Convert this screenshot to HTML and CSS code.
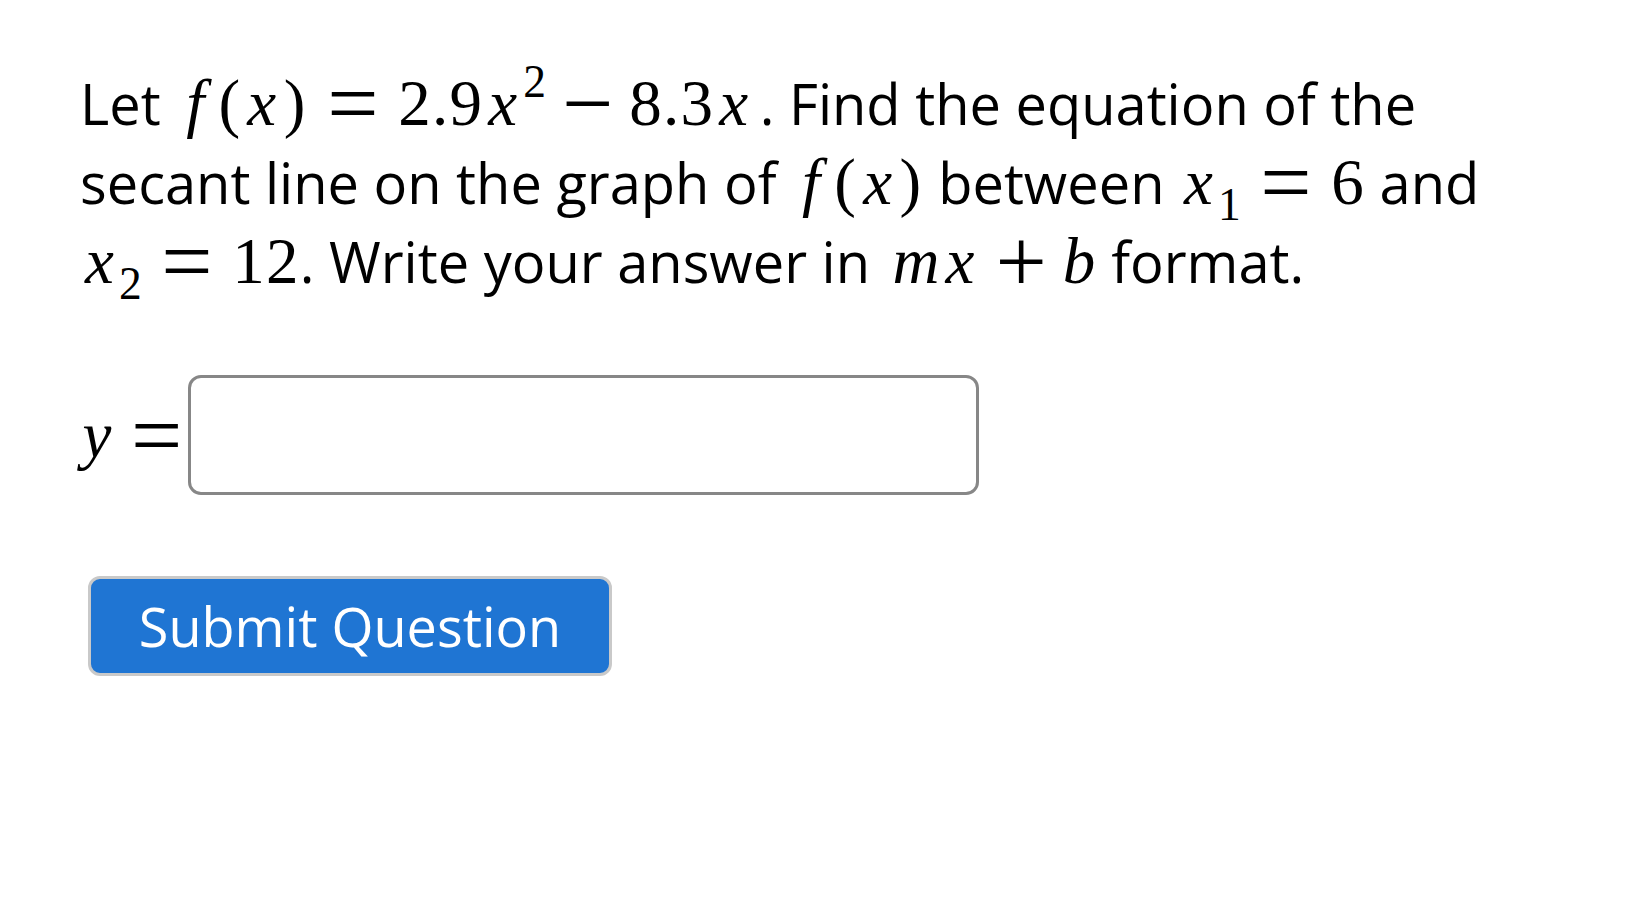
FILE: index.html
```html
<!DOCTYPE html>
<html lang="en">
<head>
<meta charset="utf-8">
<title>Question</title>
<link rel="stylesheet" href="styles.css">
</head>
<body>
<main class="question">
  <p class="prompt">Let <span class="math"><span class="mi f">f</span><span class="mp">(</span><span class="mi x">x</span><span class="mp">)</span><span class="rel">=</span><span class="mn">2.9</span><span class="mi x">x</span><sup class="sup">2</sup><span class="bin">−</span><span class="mn">8.3</span><span class="mi x x-end">x</span></span>. Find the equation of the secant line on the graph of <span class="math"><span class="mi f">f</span><span class="mp">(</span><span class="mi x">x</span><span class="mp">)</span></span> between <span class="math"><span class="mi x">x</span><sub class="sub">1</sub><span class="rel">=</span><span class="mn">6</span></span> and <span class="math"><span class="mi x">x</span><sub class="sub">2</sub><span class="rel">=</span><span class="mn">12</span></span>. Write your answer in <span class="math"><span class="mi m">m</span><span class="mi x">x</span><span class="bin">+</span><span class="mi b">b</span></span> format.</p>
  <div class="answer">
    <span class="math answer-label"><span class="mi y">y</span><span class="rel rel-end">=</span></span>
    <input class="answer-box" type="text" aria-label="y">
  </div>
  <button class="submit" type="button">Submit Question</button>
</main>
</body>
</html>
```

FILE: styles.css
```css
html, body {
  margin: 0;
  padding: 0;
  background: #ffffff;
}

body {
  color: #000000;
  font-family: "Open Sans", "Noto Sans", sans-serif;
}

.question {
  width: 1440px;
  padding: 64px 0 0 80px;
}

.prompt {
  margin: 0;
  font-size: 56px;
  font-weight: 500;
  line-height: 79px;
}

.math {
  font-family: "Liberation Serif", "DejaVu Serif", serif;
  font-size: 65px;
  font-weight: 400;
  white-space: nowrap;
}

.mi {
  font-style: italic;
}

.mi.x {
  margin: 0 0.08em 0 0.075em;
}

.mi.x-end {
  margin-right: 0.18em;
}

.mi.f {
  margin: 0 0.18em 0 0.17em;
}

.mi.m {
  margin: 0 0.02em 0 0.12em;
}

.mi.b {
  margin: 0 0.02em 0 0;
}

.mi.y {
  margin: 0 0 0 0.04em;
}

.mp {
  margin: 0 0.037em;
}

.mn {
  letter-spacing: 0.02em;
}

.rel {
  font-size: 1.4em;
  line-height: 0;
  margin: 0 0.215em;
  vertical-align: -0.1em;
}

.bin {
  font-size: 1.4em;
  line-height: 0;
  margin: 0 0.175em;
  vertical-align: -0.1em;
}

.sup {
  font-size: 0.7em;
  line-height: 0;
  vertical-align: 0.62em;
  margin-left: 0.02em;
}

.sub {
  font-size: 0.7em;
  line-height: 0;
  vertical-align: -0.36em;
}

.answer {
  display: flex;
  align-items: center;
  margin-top: 74px;
}

.answer-label {
  line-height: 1;
}

.rel-end {
  margin-right: 0.03em;
}

.answer-box {
  box-sizing: border-box;
  width: 791px;
  height: 120px;
  margin: 0 0 0 3px;
  border: 3px solid #878787;
  border-radius: 13px;
  background: #ffffff;
  outline: none;
}

.submit {
  display: block;
  box-sizing: border-box;
  width: 524px;
  height: 100px;
  margin: 81px 0 0 8px;
  padding: 0;
  border: 3px solid #c9c9c9;
  border-radius: 12px;
  background: #1f75d3;
  color: #ffffff;
  font-family: "Open Sans", "Noto Sans", sans-serif;
  font-size: 54px;
  font-weight: 500;
  line-height: 1;
  cursor: pointer;
}
```
